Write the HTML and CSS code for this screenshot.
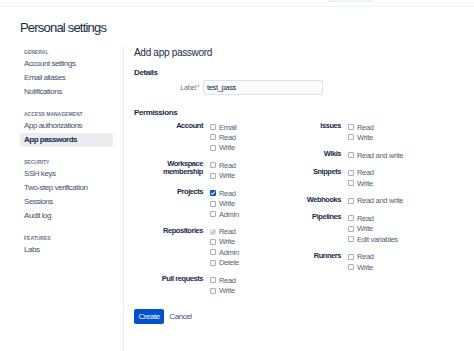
FILE: index.html
```html
<!DOCTYPE html>
<html lang="en">
<head>
    <meta charset="UTF-8">
    <meta name="viewport" content="width=device-width, initial-scale=1.0">
    <title>Personal settings</title>
    <link rel="stylesheet" href="styles.css">
</head>
<body>

<!-- Top bar -->
<div class="topbar">
    <div class="topbar-mark"></div>
</div>

<h1 class="page-title">Personal settings</h1>

<div class="layout">
    <!-- Sidebar -->
    <div class="sidebar">
        <div class="nav-group">
            <div class="nav-heading">General</div>
            <a href="#">Account settings</a>
            <a href="#">Email aliases</a>
            <a href="#">Notifications</a>
        </div>
        <div class="nav-group">
            <div class="nav-heading">Access management</div>
            <a href="#">App authorizations</a>
            <a href="#" class="active">App passwords</a>
        </div>
        <div class="nav-group">
            <div class="nav-heading">Security</div>
            <a href="#">SSH keys</a>
            <a href="#">Two-step verification</a>
            <a href="#">Sessions</a>
            <a href="#">Audit log</a>
        </div>
        <div class="nav-group">
            <div class="nav-heading">Features</div>
            <a href="#">Labs</a>
        </div>
    </div>

    <!-- Main Content -->
    <div class="content">
        <h2>Add app password</h2>

        <h3>Details</h3>
        <div class="field">
            <label class="field-label">Label<span class="req">*</span></label>
            <div class="input">test_pass</div>
        </div>

        <h3 class="perm-title">Permissions</h3>
        <div class="perms">
            <div class="perm-col">
                <div class="perm-group">
                    <div class="perm-label">Account</div>
                    <div class="options">
                        <div class="opt"><span class="box"></span>Email</div>
                        <div class="opt"><span class="box"></span>Read</div>
                        <div class="opt"><span class="box"></span>Write</div>
                    </div>
                </div>
                <div class="perm-group">
                    <div class="perm-label">Workspace<br>membership</div>
                    <div class="options">
                        <div class="opt"><span class="box"></span>Read</div>
                        <div class="opt"><span class="box"></span>Write</div>
                    </div>
                </div>
                <div class="perm-group">
                    <div class="perm-label">Projects</div>
                    <div class="options">
                        <div class="opt"><span class="box checked"><svg viewBox="0 0 6 6"><path d="M1.2 3.1 L2.5 4.3 L4.9 1.6" /></svg></span>Read</div>
                        <div class="opt"><span class="box"></span>Write</div>
                        <div class="opt"><span class="box"></span>Admin</div>
                    </div>
                </div>
                <div class="perm-group">
                    <div class="perm-label">Repositories</div>
                    <div class="options">
                        <div class="opt"><span class="box disabled"><svg viewBox="0 0 6 6"><path d="M1.2 3.1 L2.5 4.3 L4.9 1.6" /></svg></span>Read</div>
                        <div class="opt"><span class="box"></span>Write</div>
                        <div class="opt"><span class="box"></span>Admin</div>
                        <div class="opt"><span class="box"></span>Delete</div>
                    </div>
                </div>
                <div class="perm-group">
                    <div class="perm-label">Pull requests</div>
                    <div class="options">
                        <div class="opt"><span class="box"></span>Read</div>
                        <div class="opt"><span class="box"></span>Write</div>
                    </div>
                </div>
            </div>

            <div class="perm-col">
                <div class="perm-group">
                    <div class="perm-label">Issues</div>
                    <div class="options">
                        <div class="opt"><span class="box"></span>Read</div>
                        <div class="opt"><span class="box"></span>Write</div>
                    </div>
                </div>
                <div class="perm-group">
                    <div class="perm-label">Wikis</div>
                    <div class="options">
                        <div class="opt"><span class="box"></span>Read and write</div>
                    </div>
                </div>
                <div class="perm-group">
                    <div class="perm-label">Snippets</div>
                    <div class="options">
                        <div class="opt"><span class="box"></span>Read</div>
                        <div class="opt"><span class="box"></span>Write</div>
                    </div>
                </div>
                <div class="perm-group">
                    <div class="perm-label">Webhooks</div>
                    <div class="options">
                        <div class="opt"><span class="box"></span>Read and write</div>
                    </div>
                </div>
                <div class="perm-group">
                    <div class="perm-label">Pipelines</div>
                    <div class="options">
                        <div class="opt"><span class="box"></span>Read</div>
                        <div class="opt"><span class="box"></span>Write</div>
                        <div class="opt"><span class="box"></span>Edit variables</div>
                    </div>
                </div>
                <div class="perm-group">
                    <div class="perm-label">Runners</div>
                    <div class="options">
                        <div class="opt"><span class="box"></span>Read</div>
                        <div class="opt"><span class="box"></span>Write</div>
                    </div>
                </div>
            </div>
        </div>

        <div class="actions">
            <button class="btn-primary">Create</button>
            <a href="#" class="btn-link">Cancel</a>
        </div>
    </div>
</div>

</body>
</html>
```

FILE: styles.css
```css
body {
    font-family: 'Liberation Sans', Arial, sans-serif;
    margin: 0;
    padding: 0;
    background: #fff;
    color: #172b4d;
}

/* Top bar */
.topbar {
    height: 6px;
    border-bottom: 1px solid #eef0f2;
}

.topbar-mark {
    margin-left: 328px;
    width: 45px;
    height: 2px;
    background-color: #e6f6f5;
}

.page-title {
    margin: 13px 0 10px 20px;
    font-size: 13px;
    line-height: 16px;
    font-weight: normal;
    letter-spacing: -0.8px;
    color: #172b4d;
}

.layout {
    display: flex;
    min-height: calc(100vh - 46px);
}

/* Sidebar */
.sidebar {
    width: 104px;
    margin-left: 20px;
    padding-top: 1px;
    border-right: 1px solid #ebecf0;
    box-sizing: border-box;
}

.nav-group {
    margin-bottom: 10px;
}

.nav-heading {
    padding-left: 4px;
    height: 10px;
    line-height: 10px;
    font-size: 5px;
    font-weight: bold;
    text-transform: uppercase;
    color: #6b778c;
}

.sidebar a {
    display: block;
    margin-right: 10px;
    padding-left: 4px;
    height: 14px;
    line-height: 14px;
    font-size: 8px;
    letter-spacing: -0.45px;
    color: #42526e;
    text-decoration: none;
    border-radius: 2px;
}

.sidebar a.active {
    background-color: #ebecf0;
    color: #172b4d;
    font-weight: bold;
    letter-spacing: -0.5px;
}

/* Main Content */
.content {
    padding: 1px 0 0 10px;
}

.content h2 {
    margin: 0;
    font-size: 10px;
    line-height: 12px;
    font-weight: normal;
    letter-spacing: -0.3px;
}

.content h3 {
    margin: 9px 0 2px 0;
    font-size: 8px;
    line-height: 10px;
    letter-spacing: -0.4px;
}

.field {
    display: flex;
    align-items: center;
}

.field-label {
    width: 65px;
    margin-right: 4px;
    text-align: right;
    font-size: 7px;
    letter-spacing: -0.3px;
    color: #6b778c;
}

.req {
    font-size: 6px;
    vertical-align: 1px;
    margin-left: 1px;
}

.input {
    width: 120px;
    height: 15px;
    box-sizing: border-box;
    padding-left: 3px;
    border: 1px solid #dfe1e6;
    border-radius: 2px;
    background-color: #fafbfc;
    font-size: 7.5px;
    line-height: 13px;
    letter-spacing: -0.35px;
    color: #172b4d;
}

.content h3.perm-title {
    margin: 13px 0 4px 0;
}

/* Permissions */
.perms {
    display: flex;
}

.perm-col {
    width: 138px;
}

.perm-group {
    display: grid;
    grid-template-columns: 69px auto;
    column-gap: 7px;
    margin-bottom: 7.4px;
}

.perm-label {
    text-align: right;
    font-size: 7.5px;
    line-height: 8px;
    font-weight: bold;
    letter-spacing: -0.45px;
    color: #172b4d;
}

.opt {
    display: flex;
    align-items: center;
    height: 10.3px;
    font-size: 7.5px;
    letter-spacing: -0.3px;
    color: #505f79;
}

.box {
    display: inline-block;
    width: 6px;
    height: 6px;
    margin-right: 3px;
    box-sizing: border-box;
    border: 1px solid #a5adba;
    border-radius: 1px;
    background-color: #fff;
    position: relative;
}

.box svg {
    position: absolute;
    left: -1px;
    top: -1px;
    width: 6px;
    height: 6px;
    fill: none;
    stroke: #fff;
    stroke-width: 1.1;
}

.box.checked {
    background-color: #0052cc;
    border-color: #0052cc;
}

.box.disabled {
    background-color: #e4e6ea;
    border-color: #dcdfe4;
}

.box.disabled svg {
    stroke: #b3bac5;
}

/* Buttons */
.actions {
    display: flex;
    align-items: center;
    margin-top: 6px;
}

.btn-primary {
    height: 15px;
    padding: 0 4.5px;
    border: none;
    border-radius: 2px;
    background-color: #0052cc;
    color: #fff;
    font-family: inherit;
    font-size: 8px;
    letter-spacing: -0.45px;
    cursor: pointer;
}

.btn-link {
    margin-left: 5px;
    font-size: 8px;
    letter-spacing: -0.45px;
    color: #42526e;
    text-decoration: none;
}
```
